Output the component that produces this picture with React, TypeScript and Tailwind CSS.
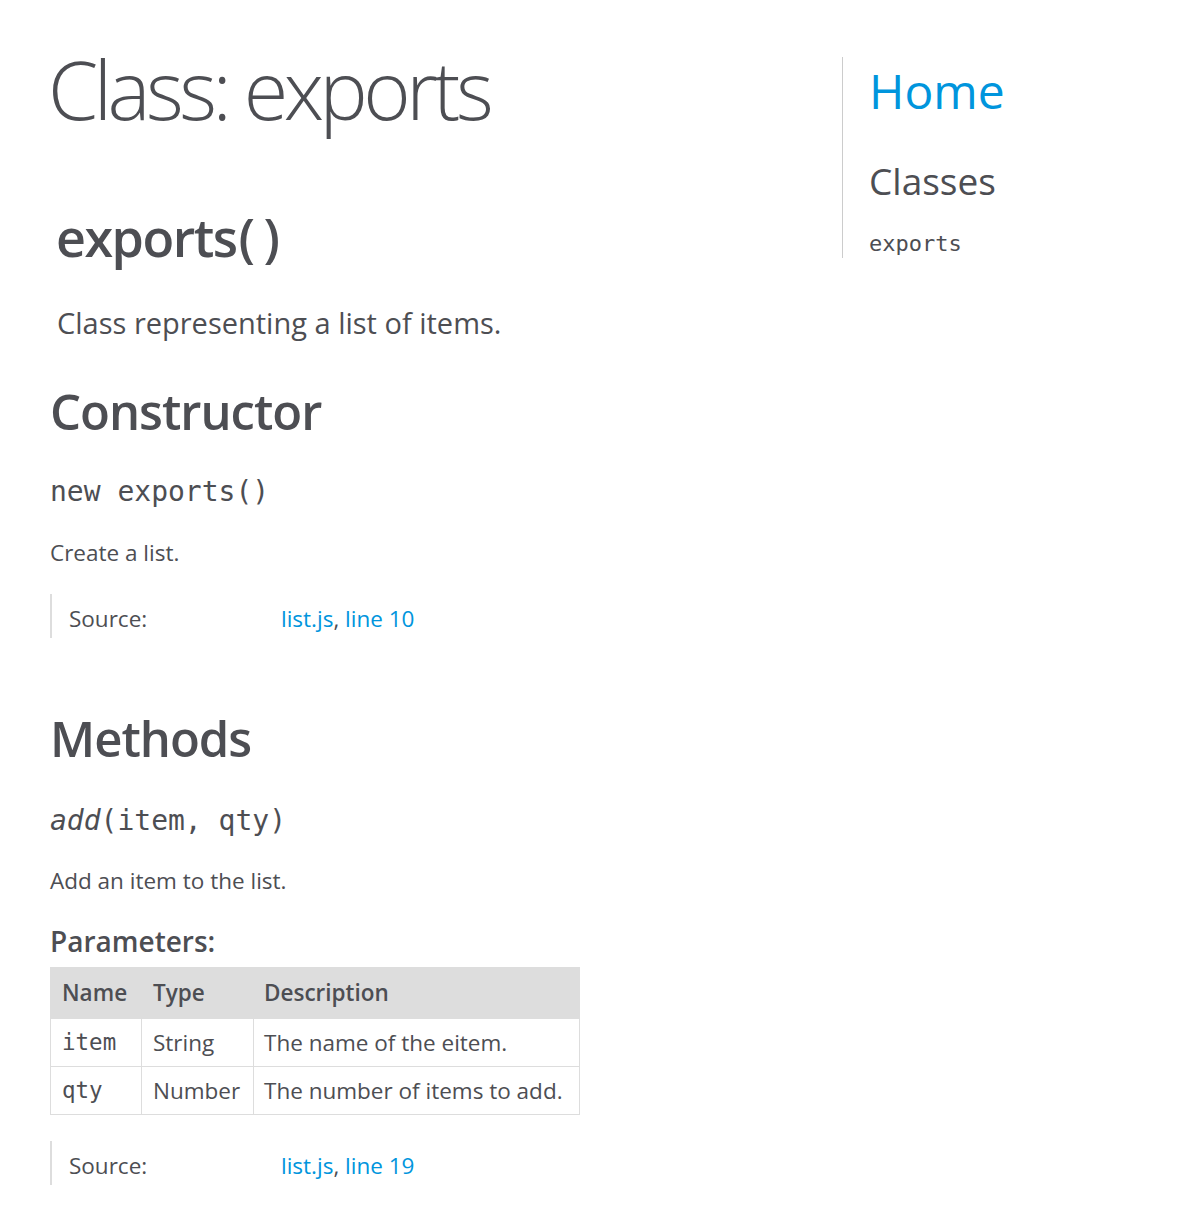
import React from 'react';

const sans = "font-['Open_Sans',sans-serif]";
const mono = "font-['DejaVu_Sans_Mono',monospace]";

function Source({ line }: { line: number }) {
  return (
    <div className="flex border-l-2 border-[#ddd] pt-[14px] pb-[7px]">
      <div className="w-[229px] pl-[17px] text-[22.5px] leading-none">Source:</div>
      <div className="text-[22.5px] leading-none">
        <a className="text-[#0095dd]">list.js</a>, <a className="text-[#0095dd]">line {line}</a>
      </div>
    </div>
  );
}

const params = [
  { name: 'item', type: 'String', desc: 'The name of the eitem.' },
  { name: 'qty', type: 'Number', desc: 'The number of items to add.' },
];

export default function App() {
  return (
    <div className={`flex w-[1200px] min-h-[1208px] bg-white text-[#4d4e53] ${sans}`}>
      <main className="w-[792px] pl-[50px]">
        <h1 className="mt-[48px] -ml-[2px] text-[81px] font-light leading-none tracking-[-4.5px]">Class: exports</h1>

        <h2 className="mt-[82px] pl-[6px] text-[52px] font-semibold leading-none tracking-[-1.5px]">
          exports<span className="ml-[2px]">(</span>
          <span className="ml-[10px]">)</span>
        </h2>
        <div className="mt-[45px] pl-[7px] text-[29px] leading-none">Class representing a list of items.</div>

        <h2 className="mt-[49.5px] text-[49px] font-semibold leading-none tracking-[-1px]">Constructor</h2>
        <h4 className={`mt-[42px] text-[28px] leading-none ${mono}`}>new exports()</h4>
        <div className="mt-[36.5px] text-[22.5px] leading-none">Create a list.</div>
        <div className="mt-[29.5px]">
          <Source line={10} />
        </div>

        <h2 className="mt-[76px] text-[49px] font-semibold leading-none tracking-[-1px]">Methods</h2>
        <h4 className={`mt-[44.5px] text-[28px] leading-none ${mono}`}>
          <span className="italic">add</span>(item, qty)
        </h4>
        <div className="mt-[35px] text-[22.5px] leading-none">Add an item to the list.</div>
        <h5 className="mt-[34.5px] text-[28px] font-semibold leading-none">Parameters:</h5>

        <table className="mt-[12px] border-collapse text-[22.5px]">
          <thead>
            <tr className="h-[51px] bg-[#ddd] font-semibold">
              <th className="w-[91px] border border-[#ddd] px-[11px] text-left align-middle font-semibold">Name</th>
              <th className="w-[112px] border border-[#ddd] border-l-[#c8c8c8] px-[11px] text-left font-semibold">Type</th>
              <th className="w-[326px] border border-[#ddd] border-l-[#c8c8c8] px-[10px] text-left font-semibold">Description</th>
            </tr>
          </thead>
          <tbody>
            {params.map((p) => (
              <tr key={p.name} className="h-[48px]">
                <td className={`border border-[#ddd] px-[11px] ${mono}`}>{p.name}</td>
                <td className="border border-[#ddd] px-[11px]">{p.type}</td>
                <td className="border border-[#ddd] px-[10px]">{p.desc}</td>
              </tr>
            ))}
          </tbody>
        </table>

        <div className="mt-[26px]">
          <Source line={19} />
        </div>
      </main>

      <nav className="mt-[57px] self-start border-l border-[#ccc] pl-[26px] pb-[3px] w-[358px] ml-[50px]">
        <h2 className="mt-[10px] text-[48px] leading-none text-[#0095dd]">Home</h2>
        <h3 className="mt-[46.5px] text-[37px] leading-none">Classes</h3>
        <div className={`mt-[34.5px] text-[22px] leading-none ${mono}`}>exports</div>
      </nav>
    </div>
  );
}
